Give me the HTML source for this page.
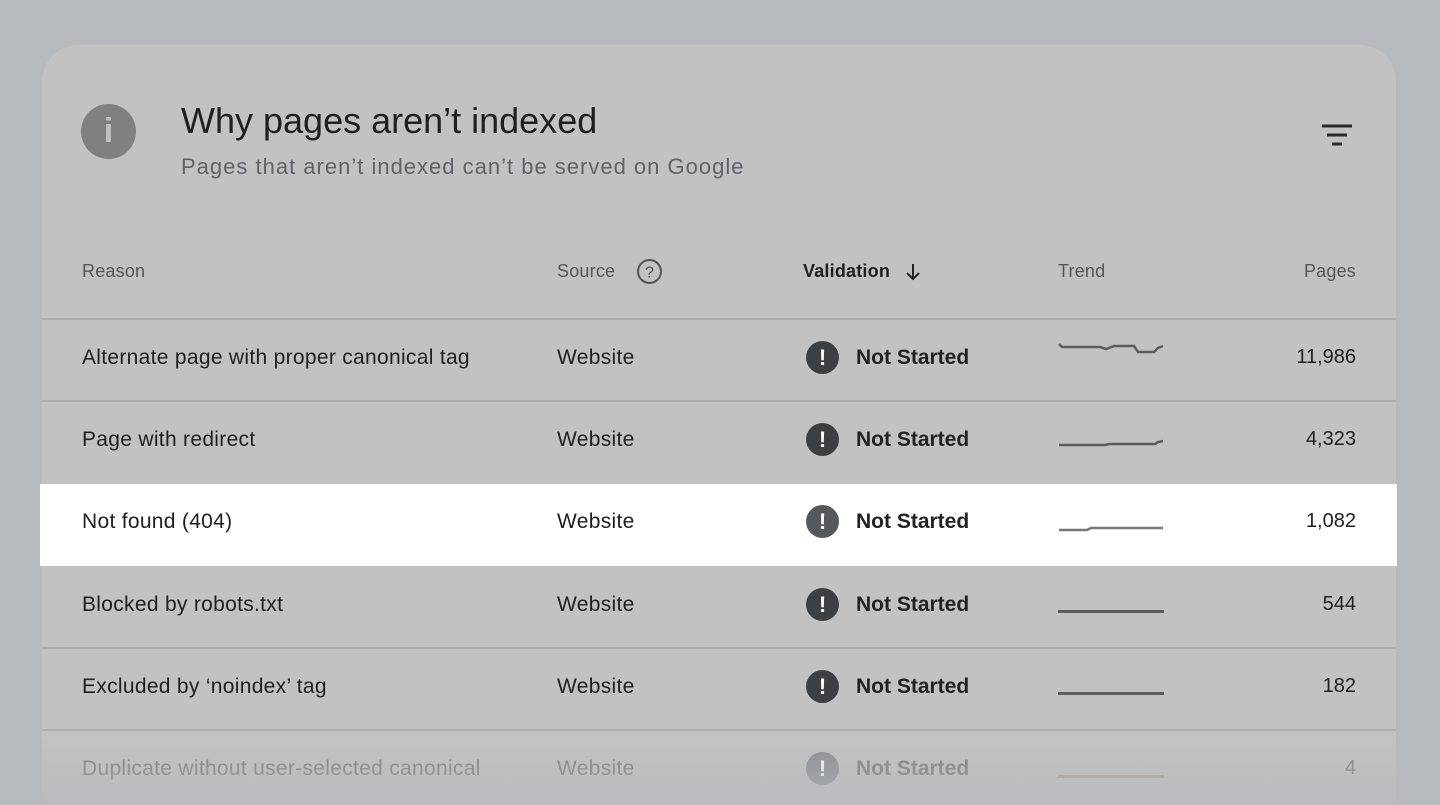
<!DOCTYPE html>
<html style="width:1440px;height:805px;overflow:hidden"><head><meta charset="utf-8"><style>
*{margin:0;padding:0;box-sizing:border-box}
body{width:1440px;height:805px;overflow:hidden;background:#b6b9bd;font-family:"Liberation Sans",sans-serif;position:relative}
.card{position:absolute;left:42px;top:45px;width:1354px;height:760px;background:#c2c2c2;border-radius:36px 36px 0 0}
.abs{position:absolute}
.t{font-size:21px;letter-spacing:0.3px;color:#1f1f1f;white-space:nowrap}
.n{position:absolute;right:84px;font-size:20px;color:#1f1f1f;text-align:right}
.h{font-size:18px;color:#555;white-space:nowrap;letter-spacing:0.2px}
.line{position:absolute;left:42px;width:1354px;height:2px;background:#aeaeae}
.ic{position:absolute;width:33px;height:33px;border-radius:50%;background:#3c4043;color:#fff;font-weight:bold;font-size:22px;text-align:center;line-height:33px}
.fade{position:absolute;left:0;top:735px;width:1440px;height:70px;background:linear-gradient(rgba(182,185,189,0),rgba(182,185,189,.75))}
</style></head><body>
<div class="card"></div>
<div class="abs" style="left:81px;top:104px;width:55px;height:55px;border-radius:50%;background:#808080;color:#c2c2c2;font-weight:bold;font-size:34px;text-align:center;line-height:55px">i</div>
<div class="abs" style="left:181px;top:100px;font-size:36px;color:#1f1f1f">Why pages aren’t indexed</div>
<div class="abs" style="left:181px;top:154px;font-size:22px;letter-spacing:1px;color:#5f6368;white-space:nowrap">Pages that aren’t indexed can’t be served on Google</div>
<svg class="abs" style="left:1320px;top:123px" width="34" height="24"><path d="M2 3h30M7 12h20M12 21h10" stroke="#2a2a2a" stroke-width="3"/></svg>
<div class="abs h" style="left:82px;top:261px">Reason</div>
<div class="abs h" style="left:557px;top:261px">Source</div>
<svg class="abs" style="left:636px;top:258px" width="27" height="27"><circle cx="13.5" cy="13.5" r="11.5" fill="none" stroke="#555" stroke-width="2"/><text x="13.5" y="19.5" font-size="16" text-anchor="middle" fill="#555" font-family="Liberation Sans">?</text></svg>
<div class="abs h" style="left:803px;top:261px;color:#1f1f1f;font-weight:bold">Validation</div>
<svg class="abs" style="left:903px;top:262px" width="20" height="20"><path d="M10 2v15M4 11l6 6 6-6" stroke="#1f1f1f" stroke-width="2" fill="none"/></svg>
<div class="abs h" style="left:1058px;top:261px">Trend</div>
<div class="abs h" style="right:84px;top:261px">Pages</div>
<div class="line" style="top:318px"></div>
<div class="line" style="top:400px"></div>
<div class="abs" style="left:40px;top:484px;width:1357px;height:82px;background:#fff"></div>
<div class="line" style="top:647px"></div>
<div class="line" style="top:729px"></div>

<div class="abs t" style="left:82px;top:346px">Alternate page with proper canonical tag</div>
<div class="abs t" style="left:557px;top:346px">Website</div>
<div class="ic" style="left:806px;top:341px">!</div>
<div class="abs t" style="left:856px;top:346px;font-weight:bold;color:#222;letter-spacing:0">Not Started</div>
<svg class="abs" style="left:1058px;top:340px" width="110" height="20"><path d="M1 4 l3 3 h38 l6 2 l8 -3 h20 l4 6 h16 l4 -4 l5 -2" stroke="#5a5d60" stroke-width="2.5" fill="none"/></svg>
<div class="n" style="top:346px">11,986</div>

<div class="abs t" style="left:82px;top:428px">Page with redirect</div>
<div class="abs t" style="left:557px;top:428px">Website</div>
<div class="ic" style="left:806px;top:423px">!</div>
<div class="abs t" style="left:856px;top:428px;font-weight:bold;color:#222;letter-spacing:0">Not Started</div>
<svg class="abs" style="left:1058px;top:432px" width="110" height="20"><path d="M1 13 h46 l4 -1 h46 l3 -2 l5 -1" stroke="#5a5d60" stroke-width="2.5" fill="none"/></svg>
<div class="n" style="top:428px">4,323</div>

<div class="abs t" style="left:82px;top:510px">Not found (404)</div>
<div class="abs t" style="left:557px;top:510px">Website</div>
<div class="ic" style="left:806px;top:505px;background:#55595c">!</div>
<div class="abs t" style="left:856px;top:510px;font-weight:bold;color:#222;letter-spacing:0">Not Started</div>
<svg class="abs" style="left:1058px;top:515px" width="110" height="20"><path d="M1 15 h28 l4 -2 h72" stroke="#777" stroke-width="2.5" fill="none"/></svg>
<div class="n" style="top:510px">1,082</div>

<div class="abs t" style="left:82px;top:593px">Blocked by robots.txt</div>
<div class="abs t" style="left:557px;top:593px">Website</div>
<div class="ic" style="left:806px;top:588px">!</div>
<div class="abs t" style="left:856px;top:593px;font-weight:bold;color:#222;letter-spacing:0">Not Started</div>
<div class="abs" style="left:1058px;top:610px;width:106px;height:3px;background:#5a5d60"></div>
<div class="n" style="top:593px">544</div>

<div class="abs t" style="left:82px;top:675px">Excluded by ‘noindex’ tag</div>
<div class="abs t" style="left:557px;top:675px">Website</div>
<div class="ic" style="left:806px;top:670px">!</div>
<div class="abs t" style="left:856px;top:675px;font-weight:bold;color:#222;letter-spacing:0">Not Started</div>
<div class="abs" style="left:1058px;top:692px;width:106px;height:3px;background:#5a5d60"></div>
<div class="n" style="top:675px">182</div>

<div class="abs t" style="left:82px;top:757px;color:#7a7a7a">Duplicate without user-selected canonical</div>
<div class="abs t" style="left:557px;top:757px;color:#7a7a7a">Website</div>
<div class="ic" style="left:806px;top:752px;background:#8a8d90">!</div>
<div class="abs t" style="left:856px;top:757px;color:#7a7a7a;font-weight:bold;letter-spacing:0">Not Started</div>
<div class="abs" style="left:1058px;top:775px;width:106px;height:3px;background:#a8a090"></div>
<div class="n" style="top:757px;color:#7a7a7a">4</div>
<div class="fade"></div>
</body></html>
